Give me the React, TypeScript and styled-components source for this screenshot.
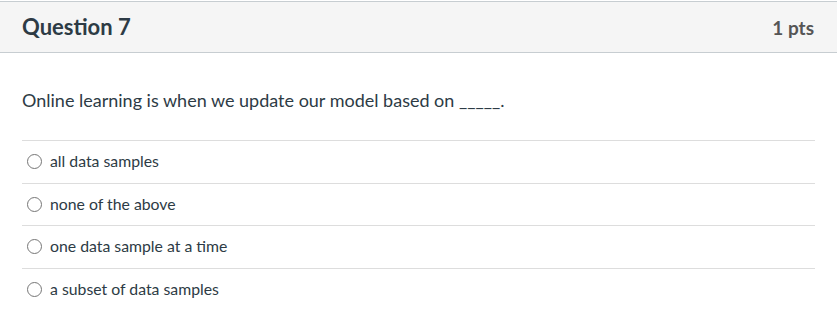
import styled, { createGlobalStyle } from "styled-components";

const GlobalStyle = createGlobalStyle`
  html, body {
    margin: 0;
    padding: 0;
    background: #fff;
  }
  body {
    font-family: Lato, "Liberation Sans", sans-serif;
    color: #2d3b45;
  }
`;

const answers = [
  "all data samples",
  "none of the above",
  "one data sample at a time",
  "a subset of data samples",
];

function App() {
  return (
    <>
      <GlobalStyle />
      <QuizCard>
        <CardHeader>
          <Title>Question 7</Title>
          <Points>1 pts</Points>
        </CardHeader>
        <CardBody>
          <QuestionText>
            Online learning is when we update our model based on _____.
          </QuestionText>
          <AnswerList>
            {answers.map((a) => (
              <AnswerRow key={a}>
                <Radio />
                <AnswerLabel>{a}</AnswerLabel>
              </AnswerRow>
            ))}
          </AnswerList>
        </CardBody>
      </QuizCard>
    </>
  );
}

export default App;

const QuizCard = styled.div`
  margin-top: 1px;
  width: 837px;
  background: #fff;
`;

const CardHeader = styled.div`
  display: flex;
  justify-content: space-between;
  align-items: center;
  height: 50px;
  padding: 0 23px 0 22px;
  background: #f5f5f5;
  border-top: 1px solid #c7cdd1;
  border-bottom: 1px solid #c7cdd1;
  box-sizing: content-box;
`;

const Title = styled.h2`
  margin: 0 0 2px;
  font-size: 22px;
  font-weight: 700;
  color: #2d3b45;
`;

const Points = styled.div`
  font-size: 19px;
  font-weight: 700;
  color: #555;
`;

const CardBody = styled.div`
  padding: 34px 22px 0 22px;
  width: 793px;
`;

const QuestionText = styled.div`
  font-size: 18px;
  line-height: 26px;
  margin-bottom: 27px;
`;

const AnswerList = styled.div`
  display: flex;
  flex-direction: column;
`;

const AnswerRow = styled.label`
  display: flex;
  align-items: center;
  gap: 8px;
  height: 41.7px;
  padding: 0 0 3px 5px;
  box-sizing: border-box;
  height: 42.7px;
  border-top: 1px solid #dddddd;
`;

const Radio = styled.span`
  width: 13px;
  height: 13px;
  border: 1px solid #767676;
  border-radius: 50%;
  background: #fff;
  flex: none;
  margin-top: 2px;
`;

const AnswerLabel = styled.span`
  font-size: 15.8px;
  color: #2d3b45;
`;
